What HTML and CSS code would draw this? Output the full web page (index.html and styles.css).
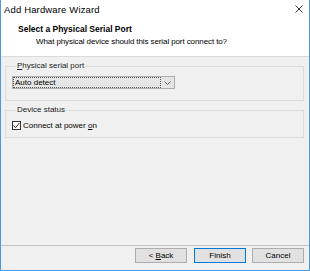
FILE: index.html
```html
<!DOCTYPE html>
<html lang="en">
<head>
    <meta charset="UTF-8">
    <meta name="viewport" content="width=device-width, initial-scale=1.0">
    <title>Add Hardware Wizard</title>
    <link rel="stylesheet" href="styles.css">
</head>
<body>

    <div class="window">
        <div class="titlebar">
            <span class="title">Add Hardware Wizard</span>
            <svg class="close" width="8" height="8" viewBox="0 0 8 8">
                <path d="M0.5 0.5 L7.5 7.5 M7.5 0.5 L0.5 7.5" stroke="#333" stroke-width="1" fill="none"/>
            </svg>
        </div>

        <div class="header">
            <div class="heading">Select a Physical Serial Port</div>
            <div class="subheading">What physical device should this serial port connect to?</div>
        </div>

        <div class="content">
            <fieldset class="group">
                <legend><u>P</u>hysical serial port</legend>
                <div class="combo">
                    <div class="combo-value">Auto detect</div>
                    <svg class="combo-arrow" width="7" height="4" viewBox="0 0 7 4">
                        <path d="M0.5 0.5 L3.5 3.5 L6.5 0.5" stroke="#666" stroke-width="1" fill="none"/>
                    </svg>
                </div>
            </fieldset>

            <fieldset class="group group-status">
                <legend>Device status</legend>
                <label class="check-row">
                    <span class="checkbox">
                        <svg width="7" height="7" viewBox="0 0 7 7">
                            <path d="M0.5 3.5 L2.5 5.8 L6.5 0.8" stroke="#333" stroke-width="1" fill="none"/>
                        </svg>
                    </span>
                    <span>Connect at power <u>o</u>n</span>
                </label>
            </fieldset>
        </div>

        <div class="footer">
            <button class="btn">&lt; <u>B</u>ack</button>
            <button class="btn btn-default">Finish</button>
            <button class="btn btn-cancel">Cancel</button>
        </div>
    </div>

</body>
</html>
```

FILE: styles.css
```css
body {
    margin: 0;
    padding: 0;
    font-family: "Liberation Sans", Arial, sans-serif;
    font-size: 8px;
    color: #000;
    background-color: #fff;
}

.window {
    width: 310px;
    height: 271px;
    box-sizing: border-box;
    border: 1px solid #4a9ae0;
    border-top: none;
    background-color: #f0f0f0;
    display: flex;
    flex-direction: column;
}

.titlebar {
    height: 20px;
    background-color: #fff;
    display: flex;
    align-items: center;
    justify-content: space-between;
    padding: 0 6px 0 3px;
}

.title {
    font-size: 9.5px;
    line-height: 20px;
    letter-spacing: 0.15px;
}

.close {
    margin-top: -3px;
}

.header {
    height: 36px;
    background-color: #fff;
    border-bottom: 1px solid #dadada;
    padding-left: 17px;
}

.heading {
    font-weight: bold;
    font-size: 8.5px;
    line-height: 12px;
    margin-top: 3px;
}

.subheading {
    line-height: 12px;
    padding-left: 18px;
    margin-top: 1px;
    letter-spacing: -0.1px;
}

.content {
    flex: 1;
    padding: 4px 5px 0 4px;
}

.group {
    margin: 0 0 4px 0;
    border: 1px solid #dcdcdc;
    padding: 5px 6px 11px 6px;
}

.group legend {
    padding: 0 1px;
    margin-left: 4px;
    line-height: 10px;
    color: #222;
}

.group-status {
    padding: 5px 6px 6px 6px;
}

.combo {
    width: 163px;
    height: 13px;
    box-sizing: border-box;
    border: 1px solid #adadad;
    background-color: #e5e5e5;
    display: flex;
    align-items: center;
}

.combo-value {
    flex: 1;
    height: 11px;
    box-sizing: border-box;
    border: 1px dotted #555;
    line-height: 9px;
    padding-left: 1px;
}

.combo-arrow {
    margin: 0 3px 0 3px;
}

.check-row {
    display: flex;
    align-items: center;
    height: 11px;
    line-height: 11px;
}

.checkbox {
    width: 9px;
    height: 9px;
    box-sizing: border-box;
    border: 1px solid #333;
    background-color: #fff;
    display: flex;
    align-items: center;
    justify-content: center;
    margin-right: 2px;
}

.footer {
    height: 25px;
    box-sizing: border-box;
    border-top: 1px solid #c4c4c4;
    display: flex;
    justify-content: flex-end;
    padding: 2px 5px 0 0;
}

button {
    font-family: "Liberation Sans", Arial, sans-serif;
    font-size: 8px;
    color: #000;
}

.btn {
    width: 52px;
    height: 15px;
    padding: 0;
    margin-left: 6px;
    border: 1px solid #adadad;
    background-color: #e1e1e1;
    line-height: 13px;
}

.btn-default {
    margin-left: 7px;
    border-color: #0078d7;
}
```
